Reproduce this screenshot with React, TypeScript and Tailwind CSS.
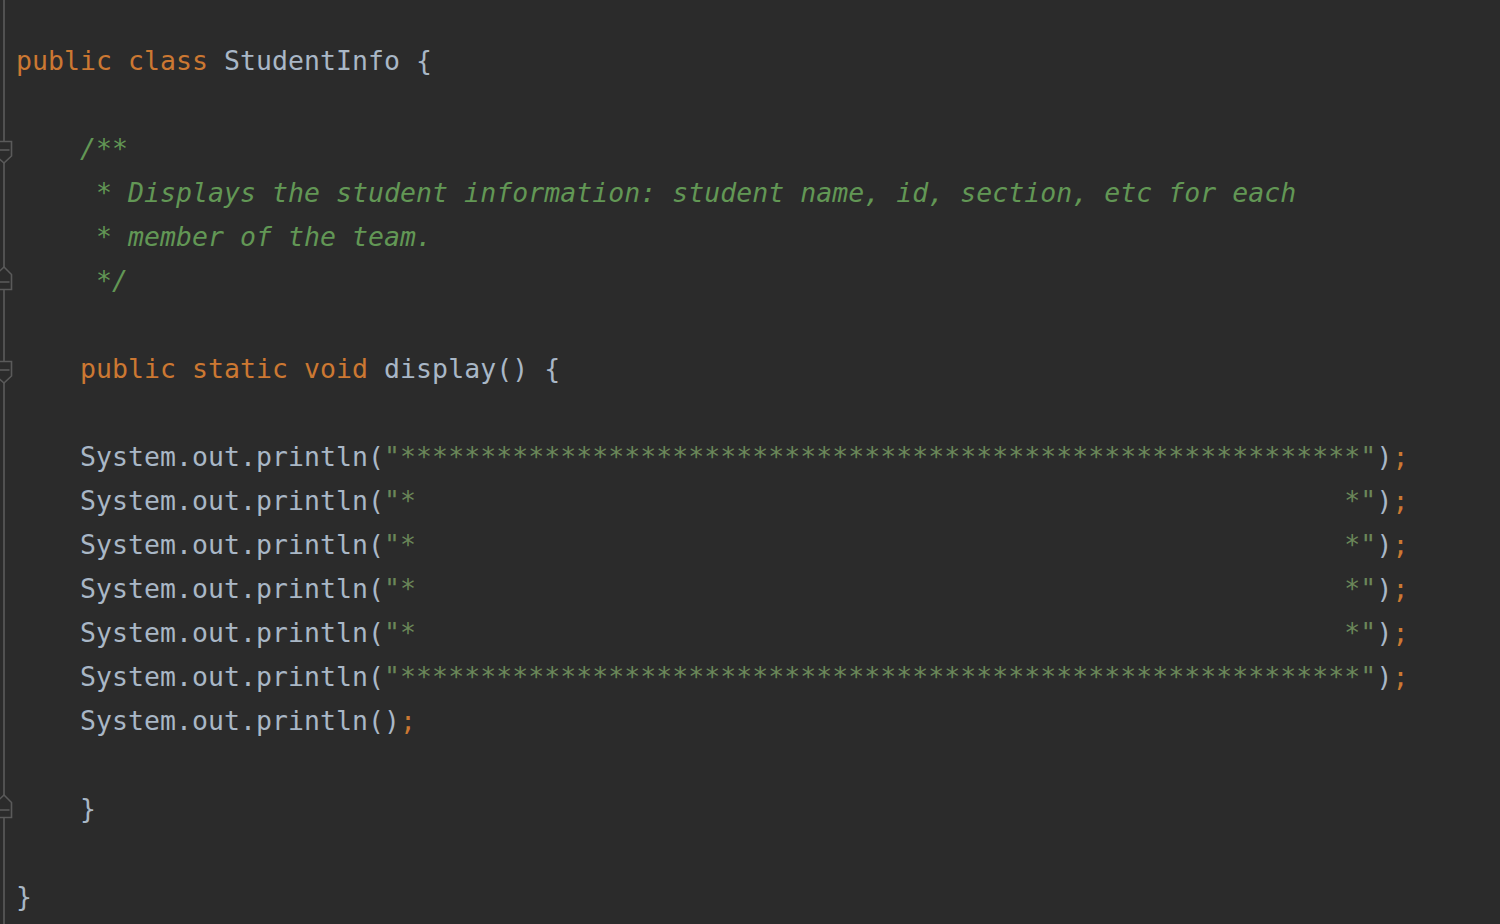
import React from "react";

type Seg = { t: string; c: "k" | "d" | "s" | "doc" };
type Row = { segs: Seg[]; marker?: "open" | "close" };

const K = (t: string): Seg => ({ t, c: "k" });
const D = (t: string): Seg => ({ t, c: "d" });
const S = (t: string): Seg => ({ t, c: "s" });
const C = (t: string): Seg => ({ t, c: "doc" });

const stars = "*".repeat(60);
const mid = "*" + " ".repeat(58) + "*";

const printRow = (content: string): Row => ({
  segs: [D("    System.out.println("), S('"' + content + '"'), D(")"), K(";")],
});

const rows: Row[] = [
  { segs: [K("public class "), D("StudentInfo {")] },
  { segs: [] },
  { segs: [C("    /**")], marker: "open" },
  { segs: [C("     * Displays the student information: student name, id, section, etc for each")] },
  { segs: [C("     * member of the team.")] },
  { segs: [C("     */")], marker: "close" },
  { segs: [] },
  { segs: [K("    public static void "), D("display() {")], marker: "open" },
  { segs: [] },
  printRow(stars),
  printRow(mid),
  printRow(mid),
  printRow(mid),
  printRow(mid),
  printRow(stars),
  { segs: [D("    System.out.println()"), K(";")] },
  { segs: [] },
  { segs: [D("    }")], marker: "close" },
  { segs: [] },
  { segs: [D("}")] },
  { segs: [] },
];

const colorClass: Record<Seg["c"], string> = {
  k: "text-[#cc7832]",
  d: "text-[#a9b7c6]",
  s: "text-[#6a8759]",
  doc: "text-[#629755] italic",
};

function Marker({ kind }: { kind?: "open" | "close" }) {
  if (!kind) return null;
  return (
    <svg width="16" height="44" viewBox="0 0 16 44" className="block">
      {kind === "open" ? (
        <path d="M-4 14.5 H11.5 V29 L4 36 L-4 29 Z" fill="#2b2b2b" stroke="#5a5a5a" strokeWidth="1.6" />
      ) : (
        <path d="M4 8 L11.5 15.5 V30.5 H-4 V15.5 Z" fill="#2b2b2b" stroke="#5a5a5a" strokeWidth="1.6" />
      )}
      <path d="M-1 23 H9.5" stroke="#5a5a5a" strokeWidth="1.6" />
    </svg>
  );
}

export default function App() {
  return (
    <div className="flex h-[924px] w-[1500px] overflow-hidden bg-[#2b2b2b]">
      <div className="w-[16px] shrink-0 pt-[39px] bg-[linear-gradient(to_right,transparent_3px,#515151_3px,#515151_5px,transparent_5px)]">
        {rows.map((r, i) => (
          <div key={i} className="h-[44px]">
            <Marker kind={r.marker} />
          </div>
        ))}
      </div>
      <div
        className="flex-1 pt-[39px] text-[26.5px] tracking-[0.05px] whitespace-pre"
        style={{ fontFamily: '"DejaVu Sans Mono", "Liberation Mono", monospace' }}
      >
        {rows.map((r, i) => (
          <div key={i} className="h-[44px] leading-[44px]">
            {r.segs.map((s, j) => (
              <span key={j} className={colorClass[s.c]}>
                {s.t}
              </span>
            ))}
          </div>
        ))}
      </div>
    </div>
  );
}
